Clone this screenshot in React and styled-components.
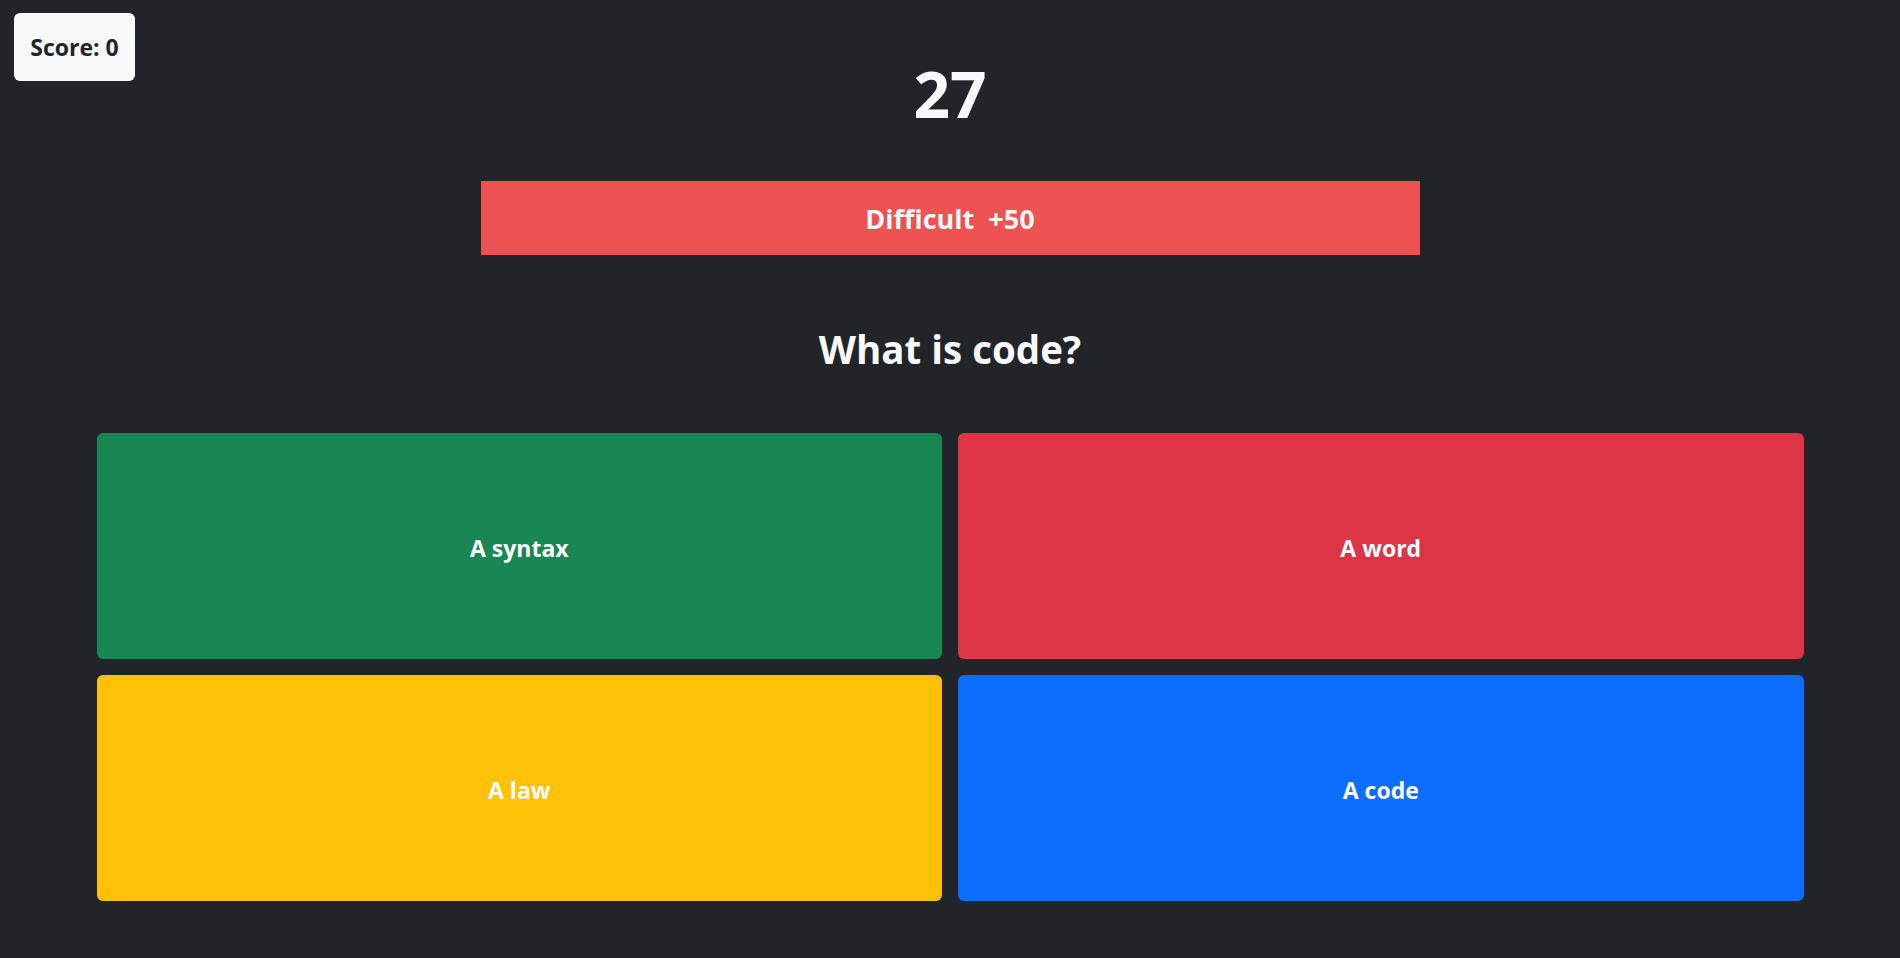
import React from "react";
import styled, { createGlobalStyle } from "styled-components";

const GlobalStyle = createGlobalStyle`
  html, body {
    margin: 0;
    padding: 0;
    background: #212529;
    height: 100%;
  }
  body {
    font-family: "Open Sans", "Noto Sans", "Liberation Sans", sans-serif;
    color: #f8f9fa;
  }
  #root {
    min-height: 100%;
  }
`;

const Page = styled.main`
  position: relative;
  min-height: 958px;
  box-sizing: border-box;
  padding-top: 56px;
  display: flex;
  flex-direction: column;
  align-items: center;
`;

const ScoreBadge = styled.div`
  position: absolute;
  top: 13px;
  left: 14px;
  width: 121px;
  height: 68px;
  box-sizing: border-box;
  display: flex;
  align-items: center;
  justify-content: center;
  background: #f8f9fa;
  color: #212529;
  border-radius: 6px;
  font-size: 23px;
  font-weight: 700;
  line-height: 1.5;
  white-space: nowrap;
`;

const Timer = styled.h1`
  margin: 0;
  font-size: 64px;
  font-weight: 700;
  line-height: 1.2;
  color: #f8f9fa;
  text-align: center;
`;

const DifficultyBar = styled.div`
  margin-top: 48px;
  width: 939px;
  height: 74px;
  box-sizing: border-box;
  padding-top: 1px;
  display: flex;
  align-items: center;
  justify-content: center;
  background: ${(p) => p.$color};
  color: #f8f9fa;
  font-size: 27px;
  font-weight: 700;
  white-space: pre;
`;

const Question = styled.h2`
  margin: 71px 0 0;
  font-size: 38.5px;
  font-weight: 700;
  line-height: 1.2;
  color: #f8f9fa;
  text-align: center;
`;

const AnswerGrid = styled.div`
  margin-top: 61px;
  width: 1707px;
  display: grid;
  grid-template-columns: 1fr 1fr;
  grid-auto-rows: 226px;
  gap: 16px;
`;

const AnswerButton = styled.button`
  border: none;
  border-radius: 6px;
  background: ${(p) => p.$bg};
  color: #ffffff;
  font-family: inherit;
  font-size: 23px;
  font-weight: 700;
  cursor: pointer;
  display: flex;
  align-items: center;
  justify-content: center;
  padding: 4px 0 0;
`;

const answers = [
  { text: "A syntax", bg: "#198754" },
  { text: "A word", bg: "#dc3545" },
  { text: "A law", bg: "#ffc107" },
  { text: "A code", bg: "#0d6efd" },
];

export default function App() {
  return (
    <>
      <GlobalStyle />
      <Page>
        <ScoreBadge>Score: 0</ScoreBadge>
        <Timer>27</Timer>
        <DifficultyBar $color="#ef5252">{"Difficult  +50"}</DifficultyBar>
        <Question>What is code?</Question>
        <AnswerGrid>
          {answers.map((a) => (
            <AnswerButton key={a.text} $bg={a.bg}>
              {a.text}
            </AnswerButton>
          ))}
        </AnswerGrid>
      </Page>
    </>
  );
}
